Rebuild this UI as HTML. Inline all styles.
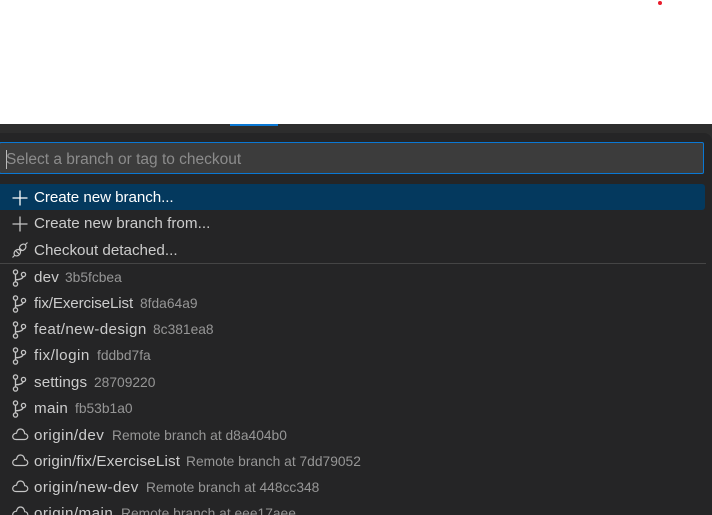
<!DOCTYPE html>
<html><head><meta charset="utf-8"><style>
html,body{margin:0;padding:0;width:712px;height:515px;overflow:hidden;background:#fff}
body{position:relative;font-family:"Liberation Sans",sans-serif}
.abs{position:absolute}
.t{position:absolute;left:34px;font-size:15.2px;line-height:20px;color:#ccc;white-space:nowrap}
.d{position:absolute;font-size:13.8px;line-height:20px;color:#969696;white-space:nowrap}
svg{position:absolute;left:11px;overflow:visible;fill:none;stroke:#c5c5c5}
</style></head><body>
<div class="abs" style="left:658px;top:1px;width:4px;height:4px;background:#e81c2c;border-radius:50%"></div>
<div class="abs" style="left:0;top:124px;width:712px;height:391px;background:#2d2d2d"></div>
<div class="abs" style="left:0;top:133px;width:712px;height:382px;background:#252526;border-radius:0 8px 0 0"></div>
<div class="abs" style="left:230px;top:124px;width:48px;height:1.5px;background:#0a78d4"></div>
<div class="abs" style="left:-1px;top:142px;width:703px;height:30px;background:#3c3c3c;border:1px solid #0a78d4;border-radius:2px"></div>
<div class="abs" style="left:6px;top:150px;width:1px;height:19px;background:#bbb"></div>
<div class="t" style="left:6px;top:150px;color:#8c8c8c;font-size:15.5px">Select a branch or tag to checkout</div>
<div class="abs" style="left:0;top:184px;width:705px;height:26px;background:#04395e;border-radius:0 3px 3px 0"></div>
<div class="abs" style="left:0;top:263px;width:706px;height:1px;background:#454545"></div>

<svg style="top:189.500px;left:11.500px" width="16" height="16" viewBox="0 0 16 16"><path d="M8 0.500V15.500M0.500 8H15.500" stroke="#fff" stroke-width="1.3"/></svg>
<div class="t" style="top:188px;color:#fff;letter-spacing:-.07px">Create new branch...</div>
<svg style="top:215.500px;left:11.500px" width="16" height="16" viewBox="0 0 16 16"><path d="M8 0.500V15.500M0.500 8H15.500" stroke-width="1.3"/></svg>
<div class="t" style="top:214px;letter-spacing:.03px">Create new branch from...</div>
<svg style="top:242px;left:12px" width="16" height="16" viewBox="0 0 16 16"><g stroke-width="1.2"><path d="M0.500 15.500L3 13M15.500 0.500L13 3M4 9L7 12M7.200 5.800L10.200 8.800"/><ellipse cx="5.300" cy="10.700" rx="3.600" ry="2.800" transform="rotate(-45 5.300 10.700)"/><ellipse cx="10.700" cy="5.300" rx="3.600" ry="2.800" transform="rotate(-45 10.700 5.300)"/></g></svg>
<div class="t" style="top:241px">Checkout detached...</div>

<svg style="top:269px" width="16" height="18" viewBox="0 0 16 18"><g id="b" stroke-width="1.3"><circle cx="4.500" cy="3" r="2.100"/><circle cx="4.500" cy="15" r="2.100"/><circle cx="12.500" cy="5.500" r="2.100"/><path d="M4.500 5V13M4.500 10.800C8.500 10.800 11.500 10 12.200 7.600"/></g></svg>
<div class="t" style="top:268px;letter-spacing:.2px">dev</div><div class="d" style="left:65px;top:268px">3b5fcbea</div>
<svg style="top:295px" width="16" height="18" viewBox="0 0 16 18"><use href="#b"/></svg>
<div class="t" style="top:294px;letter-spacing:-.14px">fix/ExerciseList</div><div class="d" style="left:140px;top:294px">8fda64a9</div>
<svg style="top:321px" width="16" height="18" viewBox="0 0 16 18"><use href="#b"/></svg>
<div class="t" style="top:320px;letter-spacing:.36px">feat/new-design</div><div class="d" style="left:153px;top:320px">8c381ea8</div>
<svg style="top:347px" width="16" height="18" viewBox="0 0 16 18"><use href="#b"/></svg>
<div class="t" style="top:346px;letter-spacing:.48px">fix/login</div><div class="d" style="left:97px;top:346px">fddbd7fa</div>
<svg style="top:374px" width="16" height="18" viewBox="0 0 16 18"><use href="#b"/></svg>
<div class="t" style="top:373px;letter-spacing:.1px">settings</div><div class="d" style="left:94px;top:373px">28709220</div>
<svg style="top:400px" width="16" height="18" viewBox="0 0 16 18"><use href="#b"/></svg>
<div class="t" style="top:399px;letter-spacing:.3px">main</div><div class="d" style="left:75px;top:399px">fb53b1a0</div>

<svg style="top:427px;left:11.500px" width="16" height="16" viewBox="0 0 16 16"><path id="c" d="M4 12.500H12.500C14.500 12.500 15.800 11 15.800 9.500C15.800 8 14.500 6.700 12.700 6.700C12.200 3.500 10.500 2 8.500 2C6.500 2 5 3.500 4.500 6.200C2.300 6.200 0.700 7.800 0.700 9.500C0.700 11.300 2 12.500 4 12.500Z" stroke-width="1.2"/></svg>
<div class="t" style="top:426px;letter-spacing:.45px">origin/dev</div><div class="d" style="left:112px;top:426px">Remote branch at d8a404b0</div>
<svg style="top:453px;left:11.500px" width="16" height="16" viewBox="0 0 16 16"><use href="#c"/></svg>
<div class="t" style="top:452px;letter-spacing:.15px">origin/fix/ExerciseList</div><div class="d" style="left:186px;top:452px">Remote branch at 7dd79052</div>
<svg style="top:479px;left:11.500px" width="16" height="16" viewBox="0 0 16 16"><use href="#c"/></svg>
<div class="t" style="top:478px;letter-spacing:.43px">origin/new-dev</div><div class="d" style="left:146px;top:478px">Remote branch at 448cc348</div>
<svg style="top:505px;left:11.500px" width="16" height="16" viewBox="0 0 16 16"><use href="#c"/></svg>
<div class="t" style="top:504px;letter-spacing:.45px">origin/main</div><div class="d" style="left:121px;top:504px">Remote branch at eee17aee</div>
</body></html>
